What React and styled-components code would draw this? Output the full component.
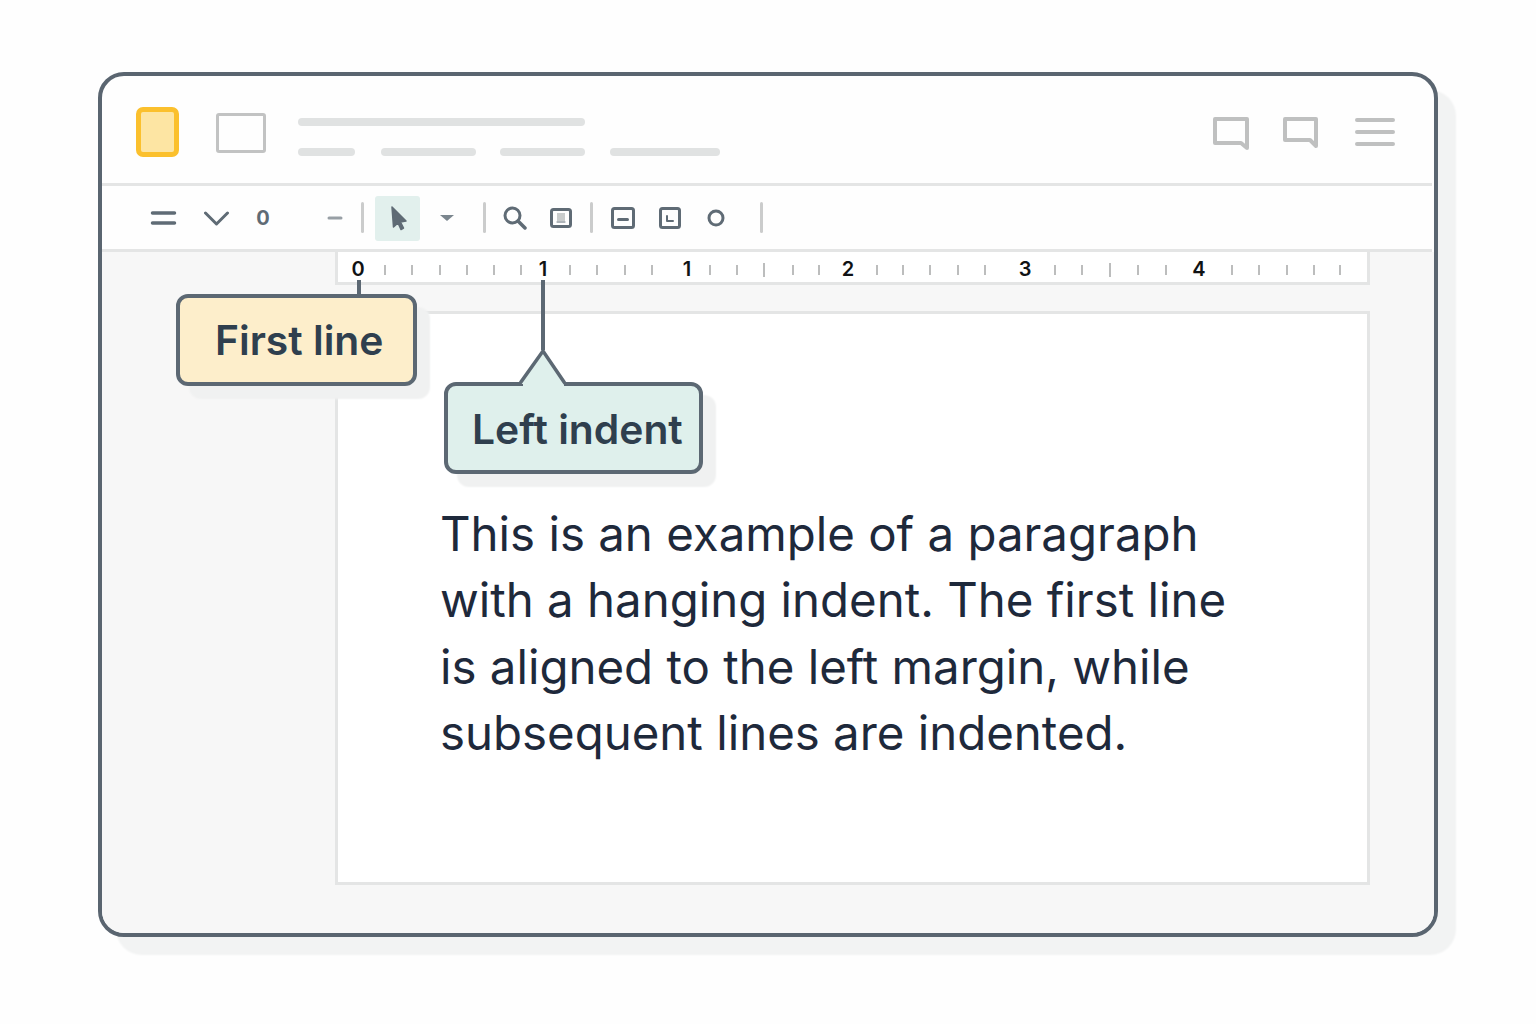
import React from 'react'
import styled, { createGlobalStyle } from 'styled-components'

const GlobalStyle = createGlobalStyle`
  html, body {
    margin: 0;
    padding: 0;
    background: #fefefe;
    font-family: Inter, "Noto Sans", sans-serif;
  }
`

// x position (page px) of every ruler mark, a digit when label is set
const RULER_MARKS = [
  { x: 358, label: '0' }, { x: 385 }, { x: 412 }, { x: 440 }, { x: 467 }, { x: 494 }, { x: 521 },
  { x: 543, label: '1' }, { x: 570 }, { x: 597 }, { x: 625 }, { x: 652 },
  { x: 687, label: '1' }, { x: 710 }, { x: 737 }, { x: 764, tall: true }, { x: 793 }, { x: 819 },
  { x: 848, label: '2' }, { x: 877 }, { x: 903 }, { x: 930 }, { x: 958 }, { x: 985 },
  { x: 1025, label: '3' }, { x: 1055 }, { x: 1082 }, { x: 1110, tall: true }, { x: 1138 }, { x: 1166 },
  { x: 1199, label: '4' }, { x: 1232 }, { x: 1259 }, { x: 1287 }, { x: 1314 }, { x: 1340 },
]

const Page = styled.div`
  width: 1536px;
  height: 1024px;
  padding: 72px 0 0 98px;
  box-sizing: border-box;
`

const Window = styled.div`
  position: relative;
  width: 1340px;
  height: 865px;
  box-sizing: border-box;
  display: flex;
  flex-direction: column;
  border: 4px solid #5a6570;
  border-radius: 26px;
  background: #fefefe;
  box-shadow: 18px 18px 2px #f2f3f3;
`

const TitleBar = styled.header`
  height: 110px;
  flex: none;
  box-sizing: border-box;
  display: flex;
  align-items: flex-start;
  margin-right: 2px;
  padding: 31px 37px 0 34px;
  border-bottom: 3px solid #e4e5e5;
`

const Logo = styled.div`
  width: 43px;
  height: 50px;
  box-sizing: border-box;
  flex: none;
  border: 5px solid #fbc02d;
  border-radius: 7px;
  background: #fde5a3;
`

const DocIcon = styled.div`
  width: 50px;
  height: 40px;
  box-sizing: border-box;
  flex: none;
  margin: 6px 32px 0 37px;
  border: 3px solid #c2c3c3;
  border-radius: 3px;
`

const TitleLines = styled.div`
  display: flex;
  flex-direction: column;
  gap: 22px;
  padding-top: 11px;
`

const TitleRow = styled.div`
  display: flex;
`

const Skeleton = styled.div`
  height: 8px;
  width: ${(p) => p.$w}px;
  margin-right: ${(p) => p.$gap || 0}px;
  border-radius: 4px;
  background: #e0e2e2;
`

const TitleActions = styled.div`
  margin-left: auto;
  display: flex;
  align-items: flex-start;
  padding-top: 10px;
`

const ActionIcon = styled.svg`
  display: block;
  flex: none;
  margin-left: ${(p) => p.$left || 0}px;
  fill: none;
  stroke: #bfc0c0;
  stroke-width: 4;
  stroke-linejoin: round;
  stroke-linecap: round;
`

const Toolbar = styled.div`
  height: 66px;
  flex: none;
  box-sizing: border-box;
  display: flex;
  align-items: center;
  margin-right: 2px;
  padding-left: 47px;
  border-bottom: 3px solid #e4e5e5;
`

const ToolIcon = styled.svg`
  display: block;
  flex: none;
  margin-left: ${(p) => p.$left || 0}px;
  fill: none;
  stroke: #5f6b75;
  stroke-width: 3;
  stroke-linecap: round;
  stroke-linejoin: round;
`

const ToolDigit = styled.span`
  width: 16px;
  margin-left: ${(p) => p.$left}px;
  text-align: center;
  font-size: 20px;
  font-weight: 700;
  line-height: 24px;
  color: #5f6b75;
`

const Separator = styled.div`
  width: 3px;
  height: 31px;
  flex: none;
  margin-left: ${(p) => p.$left}px;
  border-radius: 2px;
  background: #cbcccc;
`

const ActiveTool = styled.div`
  width: 45px;
  height: 45px;
  flex: none;
  margin: 1px 0 0 ${(p) => p.$left}px;
  display: flex;
  align-items: center;
  justify-content: center;
  border-radius: 3px;
  background: #e2f0ed;
`

const Content = styled.main`
  flex: 1;
  display: flex;
  flex-direction: column;
  padding: 0 64px 48px 233px;
  background: #f7f7f7;
  border-radius: 0 0 22px 22px;
`

const Ruler = styled.div`
  height: 33px;
  flex: none;
  box-sizing: border-box;
  display: flex;
  padding-left: 20px;
  background: #fff;
  border: solid #e4e5e5;
  border-width: 0 3px 3px 3px;
`

const RulerCell = styled.div`
  flex: none;
  height: 30px;
`

const RulerMark = styled.div`
  width: 0;
  height: 100%;
  display: flex;
  justify-content: center;
  align-items: flex-start;
`

const Tick = styled.i`
  display: block;
  flex: none;
  width: 2px;
  height: ${(p) => (p.$tall ? 14 : 10)}px;
  margin-top: ${(p) => (p.$tall ? 11 : 13)}px;
  background: #bcbdbd;
`

const RulerDigit = styled.span`
  flex: none;
  margin-top: 6px;
  font-size: 20px;
  font-weight: 600;
  line-height: 23px;
  color: #101214;
`

const Sheet = styled.section`
  margin-top: 26px;
  flex: 1;
  box-sizing: border-box;
  padding: 187px 0 0 102px;
  background: #fff;
  border: 3px solid #e4e5e5;
`

const Paragraph = styled.p`
  margin: 0;
  font-size: 47.4px;
  line-height: 66.4px;
  color: #1e293b;
  white-space: nowrap;
`

const Callout = styled.div`
  position: absolute;
  left: ${(p) => p.$left}px;
  top: ${(p) => p.$top}px;
  width: ${(p) => p.$width}px;
  height: 92px;
  box-sizing: border-box;
  display: flex;
  align-items: center;
  padding: ${(p) => p.$drop || 0}px 0 0 ${(p) => p.$pad}px;
  border: 4px solid #5c6873;
  border-radius: 12px;
  background: ${(p) => p.$bg};
  box-shadow: 13px 13px 2px #f0f1f1;
  font-size: 40.8px;
  font-weight: 600;
  color: #2f3f4e;
  white-space: nowrap;
`

const Stem = styled.div`
  position: absolute;
  left: ${(p) => p.$left}px;
  top: 204px;
  width: 4px;
  height: ${(p) => p.$height}px;
  background: #5c6873;
`

const Pointer = styled.svg`
  position: absolute;
  left: 69px;
  top: -37px;
  overflow: visible;
`

export default function App() {
  return (
    <Page>
      <GlobalStyle />
      <Window>
        <TitleBar>
          <Logo />
          <DocIcon />
          <TitleLines>
            <TitleRow>
              <Skeleton $w={287} />
            </TitleRow>
            <TitleRow>
              <Skeleton $w={57} $gap={26} />
              <Skeleton $w={95} $gap={24} />
              <Skeleton $w={85} $gap={25} />
              <Skeleton $w={110} />
            </TitleRow>
          </TitleLines>
          <TitleActions>
            <ActionIcon width="38" height="34" viewBox="0 0 38 34">
              <path d="M3 2h32v29l-6-5H3z" />
            </ActionIcon>
            <ActionIcon width="35" height="32" viewBox="0 0 35 32" $left={33}>
              <path d="M2 2h31v27l-6-6H2z" />
            </ActionIcon>
            <ActionIcon width="40" height="30" viewBox="0 0 40 30" $left={37}>
              <path d="M2 3h36M2 15h36M2 27h36" />
            </ActionIcon>
          </TitleActions>
        </TitleBar>

        <Toolbar>
          <ToolIcon width="28" height="18" viewBox="0 0 28 18" style={{ strokeWidth: 3.5 }}>
            <path d="M3.5 4h22M3.5 14h22" />
          </ToolIcon>
          <ToolIcon width="26" height="16" viewBox="0 0 26 16" $left={27}>
            <path d="M1.5 3l11 11 11-11" />
          </ToolIcon>
          <ToolDigit $left={25}>0</ToolDigit>
          <ToolIcon width="16" height="6" viewBox="0 0 16 6" $left={56} style={{ stroke: '#989fa5' }}>
            <path d="M2 3h12" />
          </ToolIcon>
          <Separator $left={18} />
          <ActiveTool $left={11}>
            <ToolIcon width="18" height="26" viewBox="0 0 18 26" $left={3}>
              <path d="M2 2l14 14-5.5 1 3 6-2.5 1.500-3-6.500-4.500 4z" fill="#5f6b75" strokeWidth="1.5" />
            </ToolIcon>
          </ActiveTool>
          <ToolIcon width="14" height="8" viewBox="0 0 14 8" $left={20} style={{ fill: '#7b868e', stroke: 'none' }}>
            <path d="M0 1h14L7 7z" />
          </ToolIcon>
          <Separator $left={29} />
          <ToolIcon width="24" height="24" viewBox="0 0 24 24" $left={17}>
            <circle cx="9.5" cy="9.5" r="7.5" />
            <path d="M15 15l7 7" strokeWidth="3.5" />
          </ToolIcon>
          <ToolIcon width="22" height="20" viewBox="0 0 22 20" $left={23}>
            <rect x="1.5" y="1.5" width="19" height="17" rx="2" />
            <rect x="7" y="5" width="8" height="8" fill="#c9cccc" stroke="none" />
            <path d="M7 14h8" strokeWidth="1" />
          </ToolIcon>
          <Separator $left={18} />
          <ToolIcon width="24" height="22" viewBox="0 0 24 22" $left={18}>
            <rect x="1.5" y="1.5" width="21" height="19" rx="2" />
            <path d="M7.5 12.5h9" strokeWidth="3" />
          </ToolIcon>
          <ToolIcon width="22" height="22" viewBox="0 0 22 22" $left={24}>
            <rect x="1.5" y="1.5" width="19" height="19" rx="2" />
            <path d="M8 9v5h6" strokeWidth="2" />
          </ToolIcon>
          <ToolIcon width="18" height="18" viewBox="0 0 18 18" $left={26}>
            <circle cx="9" cy="9" r="7" />
          </ToolIcon>
          <Separator $left={35} />
        </Toolbar>

        <Content>
          <Ruler>
            {RULER_MARKS.map((mark, i) => {
              const next = RULER_MARKS[i + 1]
              return (
                <RulerCell key={mark.x} style={{ width: next ? next.x - mark.x : 0 }}>
                  <RulerMark>
                    {mark.label ? <RulerDigit>{mark.label}</RulerDigit> : <Tick $tall={mark.tall} />}
                  </RulerMark>
                </RulerCell>
              )
            })}
          </Ruler>
          <Sheet>
            <Paragraph>
              This is an example of a paragraph
              <br />
              with a hanging indent. The first line
              <br />
              is aligned to the left margin, while
              <br />
              subsequent lines are indented.
            </Paragraph>
          </Sheet>
        </Content>

        <Stem $left={255} $height={18} />
        <Stem $left={439} $height={70} />
        <Callout $left={74} $top={218} $width={241} $pad={35} $bg="#fdeecb">
          First line
        </Callout>
        <Callout $left={342} $top={306} $width={259} $pad={24} $drop={2} $bg="#dff0ec">
          <Pointer width="52" height="37" viewBox="0 0 52 37">
            <path d="M6 34h41v3H6z" fill="#dff0ec" />
            <path d="M0 35h1q2 0 3-2L26 2l21 31q1 2 3 2h2" fill="#dff0ec" stroke="#5c6873" strokeWidth="3.5" />
          </Pointer>
          Left indent
        </Callout>
      </Window>
    </Page>
  )
}
